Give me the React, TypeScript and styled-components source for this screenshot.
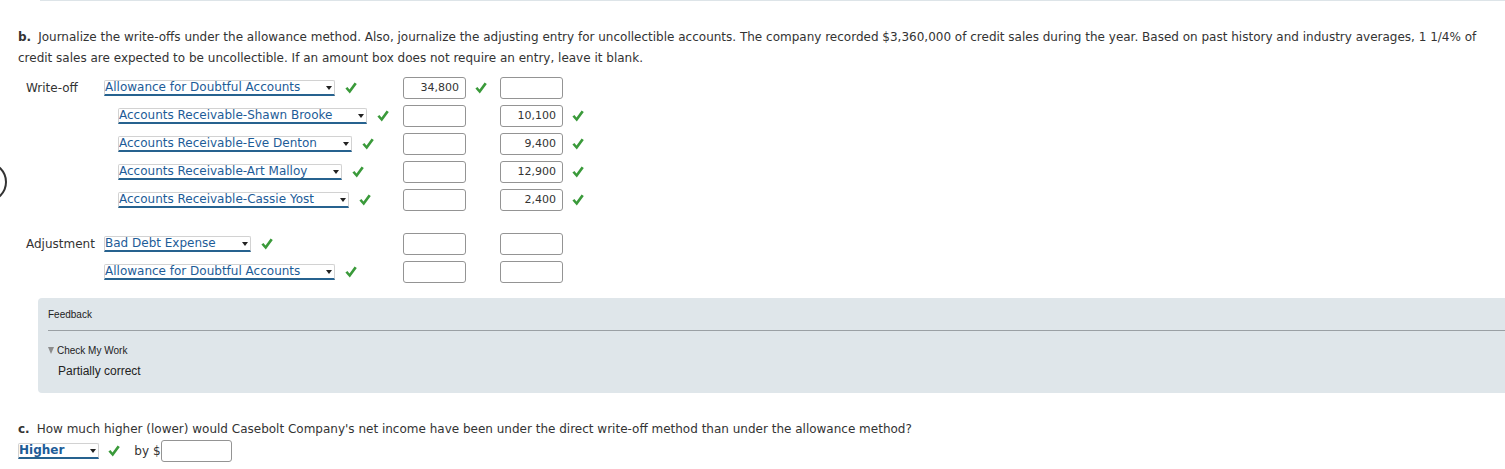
import React from "react";
import styled, { createGlobalStyle } from "styled-components";

const Global = createGlobalStyle`
  html, body { margin: 0; padding: 0; background: #fff; }
  body { font-family: "DejaVu Sans", Verdana, sans-serif; color: #333; }
`;

const Page = styled.div`
  position: relative;
  width: 1505px;
  height: 469px;
  overflow: hidden;
`;

const TopRule = styled.div`
  height: 1px;
  margin-left: 40px;
  background: #dde4e8;
`;

const EdgeCircle = styled.div`
  position: absolute;
  left: -33px;
  top: 162px;
  width: 36px;
  height: 36px;
  border: 2px solid #333;
  border-radius: 50%;
`;

const Question = styled.p`
  margin: 26px 12px 0 18px;
  font-size: 12px;
  line-height: 21px;
`;

const Marker = styled.b`
  margin-right: 7px;
`;

const Journal = styled.div`
  margin: 5px 0 0 26px;
  display: flex;
  flex-direction: column;
  gap: 16px;
`;

const EntryGroup = styled.div`
  display: flex;
  flex-direction: column;
`;

const Row = styled.div`
  display: grid;
  grid-template-columns: 78px 299px 97px 100px;
  height: 28px;
  align-items: center;
`;

const Label = styled.span`
  font-size: 12px;
`;

const AccountCell = styled.div<{ $indent?: boolean }>`
  display: flex;
  align-items: center;
  gap: 10px;
  padding-left: ${(p) => (p.$indent ? "14px" : "0")};
`;

const Select = styled.span<{ $bold?: boolean }>`
  display: inline-flex;
  align-items: center;
  height: 13px;
  border: 1px solid #d2d2d2;
  border-bottom: 2px solid #26628f;
  border-radius: 2px 2px 0 0;
  background: #fff;
  color: #1d5c98;
  font-size: 12px;
  line-height: 13px;
  font-weight: ${(p) => (p.$bold ? 700 : 400)};
  padding: 0 2px 0 0;
  white-space: nowrap;
`;

const Arrow = styled.span`
  margin-left: 26px;
  width: 0;
  height: 0;
  border-left: 3.5px solid transparent;
  border-right: 3.5px solid transparent;
  border-top: 4px solid #222;
`;

const AmountCell = styled.div`
  display: flex;
  align-items: center;
  gap: 9px;
`;

const Amount = styled.div<{ $w?: number }>`
  box-sizing: border-box;
  width: ${(p) => p.$w ?? 63}px;
  height: 22px;
  border: 1px solid #949494;
  border-radius: 3px;
  background: #fff;
  font-size: 11px;
  line-height: 20px;
  text-align: right;
  padding-right: 6px;
  color: #333;
`;

const CheckSvg = styled.svg`
  flex: none;
  display: block;
`;

const Check = () => (
  <CheckSvg width="12" height="12" viewBox="0 0 12 12">
    <path d="M0.4 6.6 L2.4 5.0 L4.5 7.4 L9.6 0.4 L11.8 1.9 L4.8 11.6 Z" fill="#3a9a3a" />
  </CheckSvg>
);

const Feedback = styled.section`
  margin: 12px 0 0 38px;
  height: 95px;
  box-sizing: border-box;
  background: #dfe6ea;
  border-radius: 4px 0 0 4px;
  padding: 11px 0 0 10px;
  font-family: "Liberation Sans", Arial, sans-serif;
  color: #222;
`;

const FeedbackTitle = styled.div`
  font-size: 10px;
  line-height: 12px;
`;

const Divider = styled.div`
  margin-top: 9px;
  height: 1px;
  background: #9aa0a4;
`;

const CheckWork = styled.div`
  margin-top: 14px;
  display: flex;
  align-items: center;
  gap: 3px;
  font-size: 10px;
  line-height: 12px;
`;

const Tri = styled.span`
  width: 0;
  height: 0;
  border-left: 3px solid transparent;
  border-right: 3px solid transparent;
  border-top: 7px solid #8c8c8c;
  margin-top: -2px;
`;

const Result = styled.div`
  margin: 7px 0 0 10px;
  font-size: 12px;
  line-height: 14px;
`;

const PartC = styled.p`
  margin: 26px 0 0 18px;
  font-size: 12px;
  line-height: 21px;
`;

const AnswerRow = styled.div`
  display: flex;
  align-items: center;
  margin-left: 18px;
  height: 22px;
  font-size: 12px;
`;

const CheckGap = styled.span`
  width: 9px;
`;

const By = styled.span`
  margin-left: 14px;
`;

type Line = { account: string; indent?: boolean; debit?: string; credit?: string };

const writeOff: Line[] = [
  { account: "Allowance for Doubtful Accounts", debit: "34,800" },
  { account: "Accounts Receivable-Shawn Brooke", indent: true, credit: "10,100" },
  { account: "Accounts Receivable-Eve Denton", indent: true, credit: "9,400" },
  { account: "Accounts Receivable-Art Malloy", indent: true, credit: "12,900" },
  { account: "Accounts Receivable-Cassie Yost", indent: true, credit: "2,400" },
];

const adjustment: Line[] = [
  { account: "Bad Debt Expense" },
  { account: "Allowance for Doubtful Accounts" },
];

const Entry = ({ label, lines }: { label: string; lines: Line[] }) => (
  <EntryGroup>
    {lines.map((l, i) => (
      <Row key={i}>
        <Label>{i === 0 ? label : ""}</Label>
        <AccountCell $indent={l.indent}>
          <Select>
            {l.account}
            <Arrow />
          </Select>
          <Check />
        </AccountCell>
        <AmountCell>
          <Amount>{l.debit ?? ""}</Amount>
          {l.debit && <Check />}
        </AmountCell>
        <AmountCell>
          <Amount>{l.credit ?? ""}</Amount>
          {l.credit && <Check />}
        </AmountCell>
      </Row>
    ))}
  </EntryGroup>
);

export default function App() {
  return (
    <Page>
      <Global />
      <TopRule />
      <EdgeCircle />
      <Question>
        <Marker>b.</Marker>Journalize the write-offs under the allowance method. Also, journalize the adjusting entry for
        uncollectible accounts. The company recorded $3,360,000 of credit sales during the year. Based on past history
        and industry averages, 1 1/4% of credit sales are expected to be uncollectible. If an amount box does not require
        an entry, leave it blank.
      </Question>
      <Journal>
        <Entry label="Write-off" lines={writeOff} />
        <Entry label="Adjustment" lines={adjustment} />
      </Journal>
      <Feedback>
        <FeedbackTitle>Feedback</FeedbackTitle>
        <Divider />
        <CheckWork>
          <Tri />
          Check My Work
        </CheckWork>
        <Result>Partially correct</Result>
      </Feedback>
      <PartC>
        <Marker>c.</Marker>How much higher (lower) would Casebolt Company's net income have been under the direct write-off
        method than under the allowance method?
      </PartC>
      <AnswerRow>
        <Select $bold>
          Higher
          <Arrow />
        </Select>
        <CheckGap />
        <Check />
        <By>by $</By>
        <Amount $w={71} />
      </AnswerRow>
    </Page>
  );
}
